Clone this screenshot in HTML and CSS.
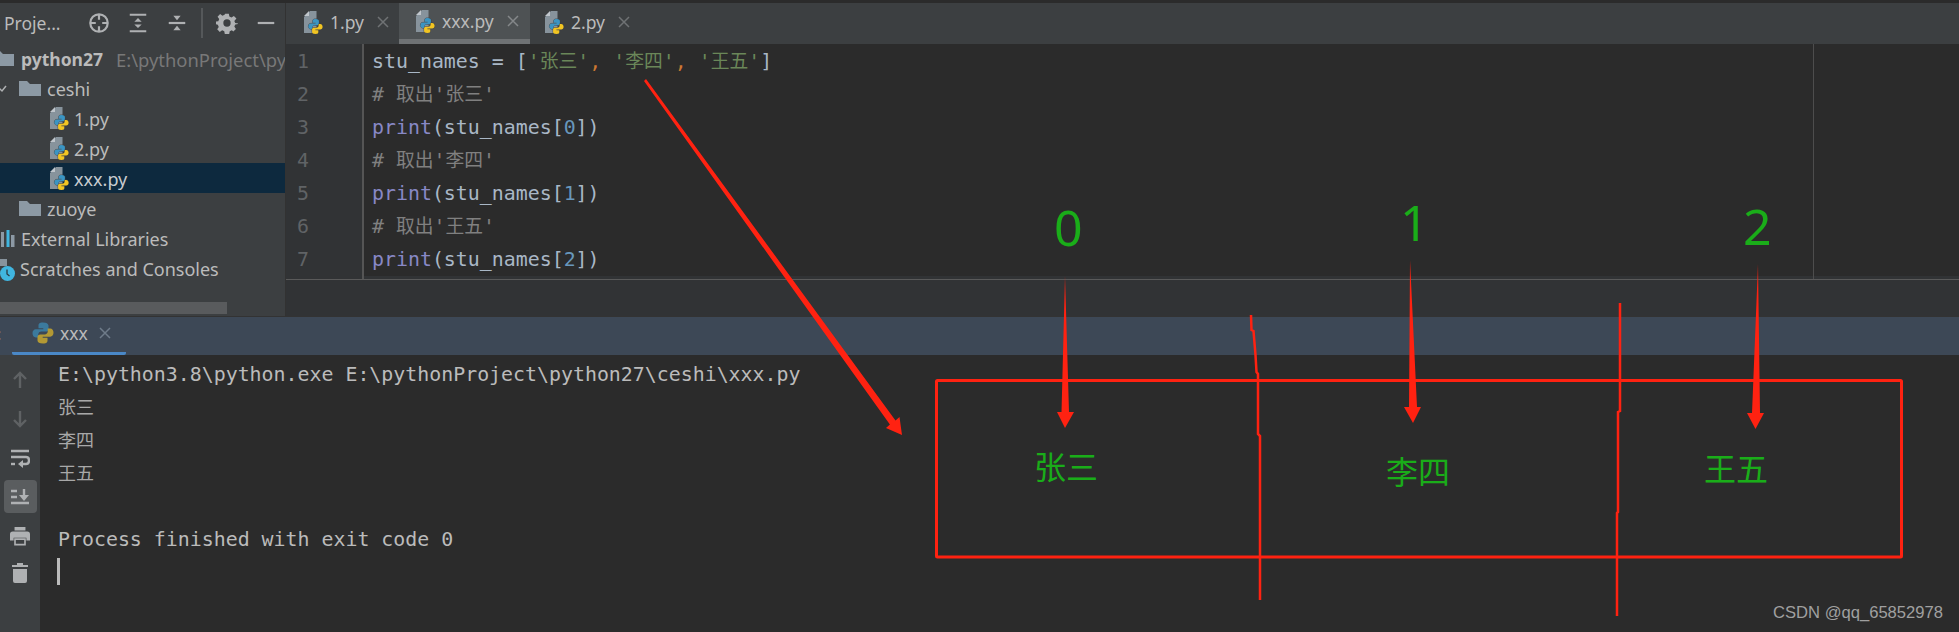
FILE: index.html
```html
<!DOCTYPE html>
<html lang="zh">
<head>
<meta charset="utf-8">
<title>xxx.py</title>
<link rel="stylesheet" href="styles.css">
</head>
<body>
<svg class="defs" width="0" height="0">
  <symbol id="py" viewBox="0 0 24 24">
    <path class="py-b" d="M12 1.5C8 1.500 7.500 3 7.500 4.500V7.200h4.800v1.100H4.800C2.800 8.300 1.500 10 1.500 12.200s1.300 4.200 3.300 4.200h2.500v-2.900c0-1.700 1.300-2.900 3-2.900h4.500c1.500 0 2.700-1.200 2.700-2.700V4.500C17 2.800 15.500 1.500 12 1.500z"/>
    <path class="py-y" d="M12 22.500c4 0 4.500-1.500 4.500-3V16.800h-4.800v-1.100h7.500c2 0 3.300-1.700 3.300-3.900s-1.300-4.200-3.300-4.200h-2.500v2.900c0 1.700-1.300 2.900-3 2.900H9.200c-1.500 0-2.700 1.200-2.700 2.700v3.400C6.500 21.200 8.500 22.500 12 22.500z"/>
  </symbol>
  <symbol id="pyfile" viewBox="0 0 20 24">
    <path class="page" d="M1 7L7 1h6.500v22H1z"/>
    <path class="fold" d="M1 6l5-5v5z"/>
    <g transform="translate(5 9)">
      <path class="pf-b" d="M7.500 0C5 0 4.700 1 4.700 2v1.700h3v.7H2.800C1.400 4.400.4 5.500.4 7.200s1 2.800 2.400 2.800h1.600V8.200c0-1.100.9-1.900 2-1.900h2.800c1 0 1.700-.8 1.700-1.800V2C10.900 1 10 0 7.500 0z"/>
      <path class="pf-y" d="M7.500 15c2.500 0 2.800-1 2.800-2v-1.700h-3v-.7h4.900c1.400 0 2.400-1.100 2.400-2.800s-1-2.800-2.400-2.800h-1.600v1.800c0 1.100-.9 1.900-2 1.900H5.800c-1 0-1.700.8-1.700 1.800V13c0 1 .9 2 3.400 2z"/>
    </g>
  </symbol>
  <symbol id="folder" viewBox="0 0 22 16">
    <path d="M0 1h8l3 3h11v12H0z"/>
  </symbol>
  <symbol id="close" viewBox="0 0 12 12">
    <path d="M1 1l10 10M11 1L1 11"/>
  </symbol>
</svg>

<div class="topstrip"></div>

<div class="upper">
  <aside class="project">
    <header class="ptool">
      <span class="ptitle">Proje...</span>
      <div class="picons">
        <svg class="ic" viewBox="0 0 24 24"><circle cx="12" cy="12" r="9.500"/><path d="M12 2.500v6M12 15.500v6M2.500 12h6M15.500 12h6"/></svg>
        <svg class="ic" viewBox="0 0 24 24"><path d="M3 3h18M3 21h18"/><path class="solid" d="M12 6.500l4 4H8zM12 17.500l-4-4h8z"/></svg>
        <svg class="ic" viewBox="0 0 24 24"><path d="M3 12h18"/><path class="solid" d="M12 9L8 4h8zM12 15l4 5H8z"/></svg>
        <span class="psep"></span>
        <svg class="ic" viewBox="0 0 24 24"><path class="solid" fill-rule="evenodd" d="M10 2h4l.6 3 2.300 1 2.600-1.700 2.800 2.800L20 9.700l1 2.300 3 .6V11.400 13l-3 .6-1 2.300 1.700 2.600-2.800 2.800L17.300 20l-2.300 1-.6 3h-4.800L9 21l-2.300-1-2.600 1.700-2.800-2.800L3 16.300 2 14l-2-.6v-3L2.500 10l1-2.300L1.700 5.100l2.800-2.800L7 4l2.300-1zM12 8a4 4 0 1 0 0 8 4 4 0 0 0 0-8z"/></svg>
        <svg class="ic" viewBox="0 0 24 24"><path d="M3 12h18"/></svg>
      </div>
    </header>
    <div class="tree">
      <div class="row l0"><svg class="fold-ic root"><use href="#folder"/></svg><b class="bold">python27</b><span class="path">E:\pythonProject\py</span></div>
      <div class="row l1"><svg class="chev" viewBox="0 0 8 8"><path d="M0 3l3 3 4-5"/></svg><svg class="fold-ic"><use href="#folder"/></svg><span>ceshi</span></div>
      <div class="row l2"><svg class="file-ic"><use href="#pyfile"/></svg><span>1.py</span></div>
      <div class="row l2"><svg class="file-ic"><use href="#pyfile"/></svg><span>2.py</span></div>
      <div class="row l2 sel"><svg class="file-ic"><use href="#pyfile"/></svg><span>xxx.py</span></div>
      <div class="row l1b"><svg class="fold-ic"><use href="#folder"/></svg><span>zuoye</span></div>
      <div class="row l0b"><svg class="lib-ic" viewBox="0 0 14 18"><path class="bar-g" d="M0 3h3v15H0zM10 6h3.500v12H10z"/><path class="bar-b" d="M5.500 1h3v17h-3z"/></svg><span>External Libraries</span></div>
      <div class="row l0c"><svg class="scr-ic" viewBox="0 0 16 24"><path class="page" d="M0 1h7v7H0z"/><circle class="clock" cx="7.500" cy="15.500" r="7.500"/><path class="hand" d="M7 11.500v4.500l2.500 2"/></svg><span>Scratches and Consoles</span></div>
    </div>
    <div class="hscroll"><div class="thumb"></div></div>
  </aside>

  <main class="editor">
    <nav class="tabs">
      <div class="tab t1"><svg class="file-ic"><use href="#pyfile"/></svg><span>1.py</span><svg class="x"><use href="#close"/></svg></div>
      <div class="tab t2 active"><svg class="file-ic"><use href="#pyfile"/></svg><span>xxx.py</span><svg class="x"><use href="#close"/></svg></div>
      <div class="tab t3"><svg class="file-ic"><use href="#pyfile"/></svg><span>2.py</span><svg class="x"><use href="#close"/></svg></div>
    </nav>
    <div class="code">
      <div class="gutter">
        <div>1</div><div>2</div><div>3</div><div>4</div><div>5</div><div>6</div><div>7</div>
      </div>
      <div class="lines">
        <div>stu_names = [<span class="s">'<span class="zh">张三</span>'</span><span class="k">,</span> <span class="s">'<span class="zh">李四</span>'</span><span class="k">,</span> <span class="s">'<span class="zh">王五</span>'</span>]</div>
        <div class="c"># <span class="zh">取出</span>'<span class="zh">张三</span>'</div>
        <div><span class="f">print</span>(stu_names[<span class="n">0</span>])</div>
        <div class="c"># <span class="zh">取出</span>'<span class="zh">李四</span>'</div>
        <div><span class="f">print</span>(stu_names[<span class="n">1</span>])</div>
        <div class="c"># <span class="zh">取出</span>'<span class="zh">王五</span>'</div>
        <div><span class="f">print</span>(stu_names[<span class="n">2</span>])</div>
        <div class="strip"></div>
      </div>
      <span class="margin"></span>
    </div>
    <div class="crumbs"></div>
  </main>
</div>

<section class="lower">
  <header class="runhead">
    <span class="dots">:</span>
    <div class="runtab">
      <svg class="py-ic"><use href="#py"/></svg><span>xxx</span><svg class="x"><use href="#close"/></svg>
    </div>
  </header>
  <div class="runbody">
    <div class="rtool">
      <svg class="ti dim" viewBox="0 0 20 20"><path d="M10 18V3M4 9l6-6 6 6"/></svg>
      <svg class="ti dim" viewBox="0 0 20 20"><path d="M10 2v15M4 11l6 6 6-6"/></svg>
      <svg class="ti" viewBox="0 0 20 20"><path d="M1 3h18M1 9h15c4 0 4 7 0 7h-4"/><path d="M1 16h4"/><path class="solid" d="M13 12v8l-5-4z"/></svg>
      <div class="ti-on"><svg class="ti" viewBox="0 0 20 20"><path d="M1 4h6M1 10h6M1 16h18"/><path d="M14 2v9"/><path class="solid" d="M9 8h10l-5 6z"/></svg></div>
      <svg class="ti" viewBox="0 0 22 22"><path class="solid" d="M5 1h12v4H5zM3 6h16q3 0 3 3v7h-4v-3H4v3H0V9q0-3 3-3z"/><path class="thin" d="M5.500 14.500h11v6h-11z"/></svg>
      <svg class="ti trash" viewBox="0 0 20 20"><path class="solid" d="M7 0h6v2h5v2H2V2h5zM3 6h14v12q0 2-2 2H5q-2 0-2-2z"/></svg>
    </div>
    <pre class="console">E:\python3.8\python.exe E:\pythonProject\python27\ceshi\xxx.py
<span class="zh">张三</span>
<span class="zh">李四</span>
<span class="zh">王五</span>

Process finished with exit code 0
<i class="caret"></i></pre>
  </div>
</section>

<svg class="marks" viewBox="0 0 1959 632">
  <rect class="box" x="936.500" y="380.500" width="965" height="176.500" rx="1"/>
  <path class="line" d="M1251 315l.5 15 2 1 2 24 1 17 1.500 2v60l2 2V600"/>
  <path class="line" d="M1620 303v108l-2 1v100l-1 1V616"/>
  <path class="arrow" d="M644 81L646 79 895.500 420.500 899.500 417 902 435 886 428 889.900 424.500z"/>
  <path class="arrow" d="M1065 276L1069 412h5l-9 16-8-16h4.500z"/>
  <path class="arrow" d="M1410 260L1417 407h4l-8 16-9-16h5z"/>
  <path class="arrow" d="M1758 264L1760 413h4l-8.500 16-8.500-16h5z"/>
</svg>
<span class="mark d0">0</span>
<span class="mark d1">1</span>
<span class="mark d2">2</span>
<span class="name n0">张三</span>
<span class="name n1">李四</span>
<span class="name n2">王五</span>
<span class="wm">CSDN @qq_65852978</span>
</body>
</html>
```

FILE: styles.css
```css
* { box-sizing: border-box; }
html, body { margin: 0; padding: 0; }
body {
  width: 1959px; height: 632px; overflow: hidden; position: relative;
  background: #2b2b2b; color: #bbbbbb;
  font-family: "Noto Sans", "Noto Sans CJK SC", sans-serif;
  display: flex; flex-direction: column;
}
.defs { position: absolute; }
.topstrip { height: 3px; background: #2b2b2b; flex: none; }
.upper { display: flex; height: 314px; flex: none; }

/* project panel */
.project { width: 286px; flex: none; background: #3c3f41; display: flex; flex-direction: column; border-right: 1px solid #323232; overflow: hidden; }
.ptool { height: 40px; flex: none; display: flex; align-items: center; padding-left: 4px; }
.ptitle { font-size: 17.500px; width: 84px; flex: none; color: #bbbbbb; }
.picons { display: flex; align-items: center; }
.ic { width: 22px; height: 22px; fill: none; stroke: #afb1b3; stroke-width: 2.400; margin-right: 17px; flex: none; }
.ic .solid { fill: #afb1b3; stroke: none; }
.psep { width: 2px; height: 30px; background: #55585a; margin: 0 13px 0 -4px; flex: none; }
.tree { flex: 1; }
.row { height: 30px; display: flex; align-items: center; font-size: 18px; white-space: nowrap; overflow: hidden; padding-top: 2px; }
.l0 { padding-left: 0; font-size: 17.500px; }
.l1, .l1b { padding-left: 19px; position: relative; }
.l2 { padding-left: 49px; }
.l0b { padding-left: 0; }
.l0c { padding-left: 0; }
.sel { background: #0d293e; color: #c8ccd0; }
.bold { font-weight: 700; margin-left: 7px; }
.path { color: #787878; margin-left: 13px; font-size: 18.400px; }
.fold-ic { width: 22px; height: 16px; fill: #8c99a4; margin-right: 6px; flex: none; margin-top: -3px; }
.root { margin-left: -8px; margin-right: 0; }
.chev { position: absolute; left: -1px; top: 12px; width: 8px; height: 8px; fill: none; stroke: #afb1b3; stroke-width: 1.500; }
.file-ic { width: 20px; height: 24px; margin-right: 5px; flex: none; margin-top: -2px; }
.page { fill: #87939c; }
.fold { fill: #c0c6cc; }
.py-b { fill: #3a95c4; }
.py-y { fill: #f2c522; }
.pf-b { fill: #3a95c4; stroke: #3c3f41; stroke-width: .8px; paint-order: stroke; }
.pf-y { fill: #f2c522; stroke: #3c3f41; stroke-width: .8px; paint-order: stroke; }
.lib-ic { width: 14px; height: 18px; margin-left: 1px; margin-right: 6px; flex: none; margin-top: -3px; }
.bar-g { fill: #8c99a4; }
.bar-b { fill: #40b6e0; }
.scr-ic { width: 16px; height: 24px; margin-right: 4px; flex: none; margin-top: 2px; }
.clock { fill: #40b6e0; }
.hand { fill: none; stroke: #2b3a44; stroke-width: 1.300; }
.hscroll { height: 15px; flex: none; padding-bottom: 2px; }
.thumb { height: 12px; width: 227px; background: #595b5d; }

/* editor */
.editor { flex: 1; display: flex; flex-direction: column; min-width: 0; }
.tabs { height: 41px; flex: none; background: #3c3f41; display: flex; }
.tab { display: flex; align-items: center; font-size: 17.500px; height: 41px; color: #bbbbbb; padding-bottom: 4px; }
.t1 { width: 113px; padding-left: 17px; }
.t2 { width: 131px; padding-left: 16px; }
.t3 { padding-left: 14px; }
.tab .file-ic { margin: 0 7px 0 0; }
.active { background: #4e5254; border-bottom: 5px solid #6f7274; padding-bottom: 0; }
.x { width: 12px; height: 12px; fill: none; stroke: #6f7274; stroke-width: 1.500; margin-left: 13px; }
.tab.active .x { stroke: #85888a; }
.code { height: 236px; flex: none; display: flex; position: relative; font: 19.900px/33px "DejaVu Sans Mono", monospace; border-bottom: 1px solid #5a5a5a; }
.gutter { width: 78px; flex: none; background: #313335; border-right: 2px solid #555555; color: #606366; padding: 1px 0 0 11px; }
.lines { flex: 1; color: #a9b7c6; padding: 1px 0 0 8px; display: flex; flex-direction: column; position: relative; }
.lines > div { height: 33px; white-space: pre; }
.lines > .strip { height: 5px; background: #313335; margin: auto 0 0 -8px; }
.s { color: #6a8759; }
.k { color: #cc7832; }
.c { color: #808080; }
.f { color: #8888c6; }
.n { color: #6897bb; }
.zh { font-family: "Noto Sans CJK SC", sans-serif; font-size: 18.800px; line-height: 1; font-weight: 400; }
.margin { position: absolute; left: 1527px; top: 0; bottom: 0; width: 1px; background: #4d4d4d; }
.crumbs { flex: 1; background: #313335; }

/* run window */
.lower { flex: 1; display: flex; flex-direction: column; min-height: 0; }
.runhead { height: 39px; flex: none; background: #3d4856; display: flex; position: relative; margin-top: -1px; border-top: 1px solid #333; }
.dots { position: absolute; left: -3px; top: 6px; font-size: 16px; color: #afb1b3; }
.runtab { margin-left: 12px; width: 114px; display: flex; align-items: center; padding: 0 0 3px 19px; font-size: 17.500px; border-bottom: 3px solid #4a88c7; border-radius: 0 0 2px 2px; }
.runtab .x { stroke: #6f7c8a; margin-left: 11px; }
.py-ic { width: 24px; height: 24px; margin-right: 5px; opacity: .65; flex: none; }
.runbody { flex: 1; display: flex; min-height: 0; }
.rtool { width: 40px; flex: none; background: #3c3f41; display: flex; flex-direction: column; align-items: center; padding-top: 15px; }
.ti { width: 20px; height: 20px; fill: none; stroke: #afb1b3; stroke-width: 2.400; margin-bottom: 19px; flex: none; }
.ti .solid { fill: #afb1b3; stroke: none; }
.ti .thin { fill: #3c3f41; stroke: #afb1b3; stroke-width: 1.800; }
.ti.dim { stroke: #5f6264; }
.ti.trash { margin-top: -2px; }
.ti-on { width: 33px; height: 33px; background: #5a5d5f; border-radius: 4px; display: flex; align-items: center; justify-content: center; margin: -7px 0 13px; flex: none; }
.ti-on .ti { margin: 0; }
.console { flex: 1; margin: 0; padding: 3px 0 0 18px; font: 19.900px/33px "DejaVu Sans Mono", monospace; color: #bbbbbb; }
.console .zh { font-size: 18px; color: #a8a8a8; }
.caret { display: inline-block; width: 3px; height: 27px; background: #bbbbbb; margin: 2px 0 0 -1px; }

/* red annotations laid over the screenshot */
.marks { position: absolute; left: 0; top: 0; width: 1959px; height: 632px; pointer-events: none; }
.box { fill: none; stroke: #ff2211; stroke-width: 3; }
.line { fill: none; stroke: #ff2211; stroke-width: 2.500; }
.arrow { fill: #ff2211; }
.mark { position: absolute; color: #1aad19; font: 50px/60px "Noto Sans", sans-serif; }
.d0 { left: 1054px; top: 197px; }
.d1 { left: 1400px; top: 192px; }
.d2 { left: 1743px; top: 196px; }
.name { position: absolute; color: #1aad19; font: 32px/40px "Noto Sans CJK SC", sans-serif; }
.n0 { left: 1034px; top: 445px; }
.n1 { left: 1386px; top: 450px; }
.n2 { left: 1704px; top: 447px; }
.wm { position: absolute; left: 1773px; top: 603px; font: 16.600px/20px "Liberation Sans", sans-serif; color: #a0a0a0; }
```
